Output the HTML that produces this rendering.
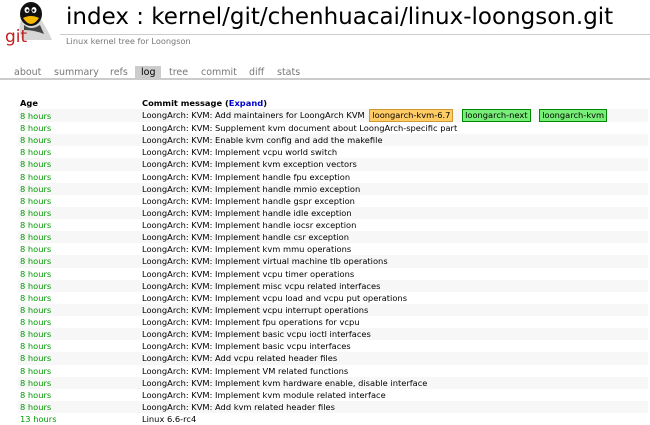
<!DOCTYPE html>
<html><head><meta charset="utf-8"><style>
body{margin:0;background:#fff;font-family:"DejaVu Sans",sans-serif;font-size:8.3px;color:#000;width:650px;height:417px;overflow:hidden;position:relative}
.abs{position:absolute;white-space:nowrap}
.title{left:66px;top:2px;font-size:23px;line-height:30px}
.hr{left:60px;top:34px;width:590px;height:1px;background:#ccc}
.sub{left:66px;top:36px;color:#777;font-size:8.2px}
.tabs{left:0;top:66px;width:650px;height:12px;border-bottom:2px solid #ccc}
.tab{position:absolute;top:0;height:13px;line-height:14px;color:#777;font-size:9.5px}
.tab.act{background:#ccc;color:#000;padding:0 6px;margin-left:-6px}
table{position:absolute;left:18px;top:97px;border-collapse:collapse;width:630px}
td,th{padding:0 2px;height:12.13px;line-height:12px;text-align:left;white-space:nowrap}
th{font-weight:bold;height:11px}
tr.s td{background:#f7f7f7}
td.a{color:#009900;width:118px}
.d{display:inline-block;border:1px solid;padding:0 2px;margin-left:2px;line-height:11px;height:11px}
.t1{background:#ffcc66;border-color:#cc9933}
.t2{background:#77ee77;border-color:#008800;margin-left:6px}
</style></head><body>
<svg class="abs" style="left:0;top:0" width="60" height="50" viewBox="0 0 60 50">
<path d="M22 40 Q17 28 22 18 L40 18 Q48 30 52 40 Z" fill="#bbb" opacity="0.6"/>
<ellipse cx="31" cy="14" rx="11" ry="12" fill="#111"/>
<ellipse cx="27" cy="10" rx="2.5" ry="3" fill="#fff"/><ellipse cx="34" cy="10" rx="2.5" ry="3" fill="#fff"/>
<circle cx="27.5" cy="10.5" r="1.2" fill="#000"/><circle cx="33.5" cy="10.5" r="1.2" fill="#000"/>
<path d="M23 18 Q31 14 39 18 Q35 24 31 24 Q27 24 23 18Z" fill="#f5b800"/>
<path d="M24 25 Q31 31 40 25 L44 34 Q34 30 24 30Z" fill="#444"/>
<text x="5" y="42" font-family="DejaVu Sans,sans-serif" font-size="17" fill="#c02020">git</text>
</svg>
<div class="abs title">index : kernel/git/chenhuacai/linux-loongson.git</div>
<div class="abs hr"></div>
<div class="abs sub">Linux kernel tree for Loongson</div>
<div class="abs tabs">
<span class="tab" style="left:14px">about</span>
<span class="tab" style="left:54px">summary</span>
<span class="tab" style="left:110px">refs</span>
<span class="tab act" style="left:141px">log</span>
<span class="tab" style="left:169px">tree</span>
<span class="tab" style="left:201px">commit</span>
<span class="tab" style="left:249px">diff</span>
<span class="tab" style="left:277px">stats</span>
</div>
<table>
<tr><th>Age</th><th>Commit message (<span style="color:#0000cc">Expand</span>)</th></tr>
<tr class="s"><td class="a">8 hours</td><td>LoongArch: KVM: Add maintainers for LoongArch KVM <span class="d t1">loongarch-kvm-6.7</span> <span class="d t2">loongarch-next</span> <span class="d t2">loongarch-kvm</span></td></tr>
<tr><td class="a">8 hours</td><td>LoongArch: KVM: Supplement kvm document about LoongArch-specific part</td></tr>
<tr class="s"><td class="a">8 hours</td><td>LoongArch: KVM: Enable kvm config and add the makefile</td></tr>
<tr><td class="a">8 hours</td><td>LoongArch: KVM: Implement vcpu world switch</td></tr>
<tr class="s"><td class="a">8 hours</td><td>LoongArch: KVM: Implement kvm exception vectors</td></tr>
<tr><td class="a">8 hours</td><td>LoongArch: KVM: Implement handle fpu exception</td></tr>
<tr class="s"><td class="a">8 hours</td><td>LoongArch: KVM: Implement handle mmio exception</td></tr>
<tr><td class="a">8 hours</td><td>LoongArch: KVM: Implement handle gspr exception</td></tr>
<tr class="s"><td class="a">8 hours</td><td>LoongArch: KVM: Implement handle idle exception</td></tr>
<tr><td class="a">8 hours</td><td>LoongArch: KVM: Implement handle iocsr exception</td></tr>
<tr class="s"><td class="a">8 hours</td><td>LoongArch: KVM: Implement handle csr exception</td></tr>
<tr><td class="a">8 hours</td><td>LoongArch: KVM: Implement kvm mmu operations</td></tr>
<tr class="s"><td class="a">8 hours</td><td>LoongArch: KVM: Implement virtual machine tlb operations</td></tr>
<tr><td class="a">8 hours</td><td>LoongArch: KVM: Implement vcpu timer operations</td></tr>
<tr class="s"><td class="a">8 hours</td><td>LoongArch: KVM: Implement misc vcpu related interfaces</td></tr>
<tr><td class="a">8 hours</td><td>LoongArch: KVM: Implement vcpu load and vcpu put operations</td></tr>
<tr class="s"><td class="a">8 hours</td><td>LoongArch: KVM: Implement vcpu interrupt operations</td></tr>
<tr><td class="a">8 hours</td><td>LoongArch: KVM: Implement fpu operations for vcpu</td></tr>
<tr class="s"><td class="a">8 hours</td><td>LoongArch: KVM: Implement basic vcpu ioctl interfaces</td></tr>
<tr><td class="a">8 hours</td><td>LoongArch: KVM: Implement basic vcpu interfaces</td></tr>
<tr class="s"><td class="a">8 hours</td><td>LoongArch: KVM: Add vcpu related header files</td></tr>
<tr><td class="a">8 hours</td><td>LoongArch: KVM: Implement VM related functions</td></tr>
<tr class="s"><td class="a">8 hours</td><td>LoongArch: KVM: Implement kvm hardware enable, disable interface</td></tr>
<tr><td class="a">8 hours</td><td>LoongArch: KVM: Implement kvm module related interface</td></tr>
<tr class="s"><td class="a">8 hours</td><td>LoongArch: KVM: Add kvm related header files</td></tr>
<tr><td class="a">13 hours</td><td>Linux 6.6-rc4</td></tr>
</table>
</body></html>
